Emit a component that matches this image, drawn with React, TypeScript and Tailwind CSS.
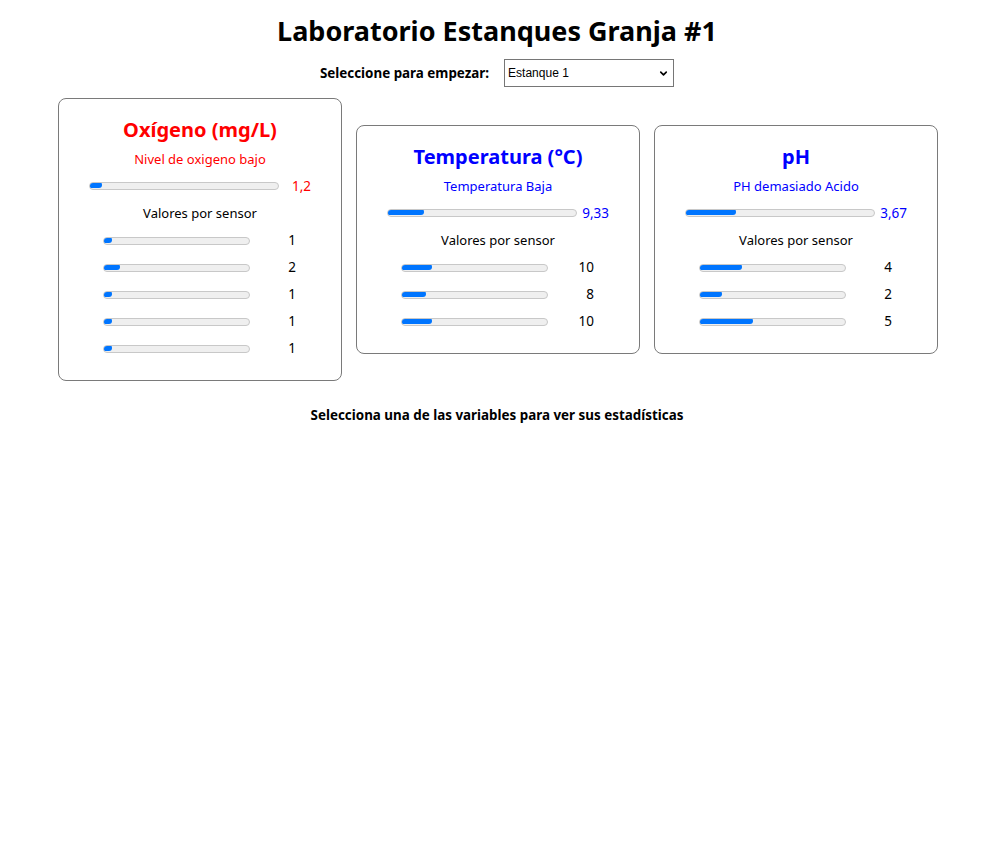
import { ChevronDown } from 'lucide-react';

type Variable = {
  title: string;
  status: string;
  color: string;
  value: string;
  pct: number;
  sensors: { value: number; pct: number }[];
};

const variables: Variable[] = [
  {
    title: 'Oxígeno (mg/L)',
    status: 'Nivel de oxigeno bajo',
    color: 'text-[#ff0000]',
    value: '1,2',
    pct: 6,
    sensors: [1, 2, 1, 1, 1].map((v) => ({ value: v, pct: v * 5 })),
  },
  {
    title: 'Temperatura (°C)',
    status: 'Temperatura Baja',
    color: 'text-[#0000ff]',
    value: '9,33',
    pct: 18.7,
    sensors: [10, 8, 10].map((v) => ({ value: v, pct: v * 2 })),
  },
  {
    title: 'pH',
    status: 'PH demasiado Acido',
    color: 'text-[#0000ff]',
    value: '3,67',
    pct: 26.2,
    sensors: [4, 2, 5].map((v) => ({ value: v, pct: (v / 14) * 100 })),
  },
];

function Bar({ pct, width }: { pct: number; width: string }) {
  return (
    <div className={`${width} h-[8px] rounded-full bg-[#efefef] border border-[#c8c8c8] overflow-hidden shrink-0`}>
      <div className="h-full bg-[#0075ff] rounded-full -m-px" style={{ width: `calc(${pct}% + 2px)` }} />
    </div>
  );
}

function VariableCard({ v }: { v: Variable }) {
  return (
    <div className="w-[284px] border border-[#7a7a7a] rounded-lg pt-[16px] pb-[18px] bg-white">
      <div className={`h-[30px] flex items-center justify-center text-[20px] font-bold ${v.color}`}>{v.title}</div>
      <div className={`h-[30px] flex items-center justify-center text-[13px] ${v.color}`}>{v.status}</div>
      <div className="h-[22px] flex items-center pl-[30px] pr-[30px]">
        <Bar pct={v.pct} width="w-[190px]" />
        <span className={`flex-1 text-right text-[13.5px] ${v.color}`}>{v.value}</span>
      </div>
      <div className="mt-[4px] h-[26px] flex items-center justify-center text-[13px] text-black">Valores por sensor</div>
      {v.sensors.map((s, i) => (
        <div key={i} className="h-[27px] flex items-center pl-[44px] pr-[45px]">
          <Bar pct={s.pct} width="w-[147px]" />
          <span className="flex-1 text-right text-[13.5px] text-black">{s.value}</span>
        </div>
      ))}
    </div>
  );
}

export default function App() {
  return (
    <div className="min-h-[864px] bg-white text-black font-['Noto_Sans',sans-serif]">
      <h1 className="pt-[12px] text-center text-[27px] font-bold leading-[38px] pr-[6px]">Laboratorio Estanques Granja #1</h1>
      <div className="mt-[9px] flex items-center justify-center gap-[15px] pr-[6px]">
        <span className="text-[13.4px] font-bold">Seleccione para empezar:</span>
        <div className="relative w-[170px] h-[28px]">
          <select className="appearance-none w-full h-full border border-[#767676] bg-white pl-[3px] text-[12px] font-['Liberation_Sans',Arial,sans-serif] text-black outline-none">
            <option>Estanque 1</option>
            <option>Estanque 2</option>
            <option>Estanque 3</option>
          </select>
          <ChevronDown className="absolute right-[5px] top-[9px] w-[11px] h-[11px] pointer-events-none" strokeWidth={3.5} />
        </div>
      </div>
      <div className="mt-[11px] flex items-center justify-center gap-[14px] pr-[4px]">
        {variables.map((v) => (
          <VariableCard key={v.title} v={v} />
        ))}
      </div>
      <p className="mt-[24px] text-center text-[13.4px] font-bold pr-[6px]">
        Selecciona una de las variables para ver sus estadísticas
      </p>
    </div>
  );
}
